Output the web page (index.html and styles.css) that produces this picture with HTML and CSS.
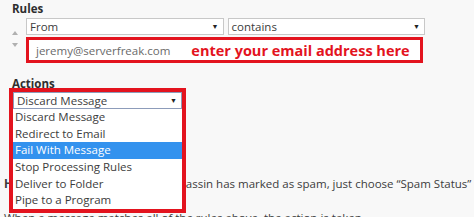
FILE: index.html
```html
<!DOCTYPE html>
<html lang="en">
  <head>
    <meta charset="UTF-8" />
    <title>Email Filter Rules</title>
    <link rel="stylesheet" href="styles.css">
  </head>
  <body>
    <div class="page">
      <h3 class="section-title">Rules</h3>

      <div class="rule-row">
        <div class="order">
          <span class="arrow-up"></span>
          <span class="arrow-down"></span>
        </div>
        <div class="fields">
          <div class="field-line">
            <div class="select">From<span class="caret">&#9660;</span></div>
            <div class="select">contains<span class="caret">&#9660;</span></div>
          </div>
          <div class="email-box">
            <span class="email-value">jeremy@serverfreak.com</span>
            <span class="email-note">enter your email address here</span>
          </div>
        </div>
      </div>

      <h3 class="section-title actions-title">Actions</h3>

      <div class="picker">
        <div class="select select-focus">Discard Message<span class="caret">&#9660;</span></div>
        <ul class="menu">
          <li>Discard Message</li>
          <li>Redirect to Email</li>
          <li class="active">Fail With Message</li>
          <li>Stop Processing Rules</li>
          <li>Deliver to Folder</li>
          <li>Pipe to a Program</li>
        </ul>
      </div>

      <p class="hint"><b>Hint:</b> If you wish to filter SpamAssassin has marked as spam, just choose &ldquo;Spam Status&rdquo; and set it to match.</p>
      <p class="hint">When a message matches all of the rules above, the action is taken.</p>
    </div>
  </body>
</html>
```

FILE: styles.css
```css
body {
  margin: 0;
  background-color: #f8f8f8;
  font-family: "Open Sans", "Liberation Sans", sans-serif;
  font-size: 11.5px;
  color: #3c3c3c;
  overflow: hidden;
}
.page {
  padding: 0 4px;
}
.section-title {
  margin: 0;
  padding-left: 8px;
  font-size: 11.5px;
  line-height: 17px;
  color: #2e2e2e;
}
.actions-title {
  margin-top: 12px;
}
.rule-row {
  display: flex;
  margin-top: 1px;
}
.order {
  width: 22px;
  display: flex;
  flex-direction: column;
  align-items: center;
  padding-top: 13px;
  gap: 8px;
}
.arrow-up,
.arrow-down {
  width: 0;
  height: 0;
  border-left: 3px solid transparent;
  border-right: 3px solid transparent;
}
.arrow-up {
  border-bottom: 4px solid #b0b0b0;
}
.arrow-down {
  border-top: 4px solid #b0b0b0;
}
.fields {
  width: 399px;
}
.field-line {
  display: flex;
  gap: 4px;
}
.select {
  flex: 1;
  height: 17px;
  box-sizing: border-box;
  display: flex;
  align-items: center;
  justify-content: space-between;
  padding: 0 4px 0 3px;
  background-color: white;
  border: 1px solid #c8c8c8;
  color: #3c3c3c;
  line-height: 15px;
}
.caret {
  font-size: 7px;
  color: #222;
}
.email-box {
  width: 397px;
  height: 26px;
  margin-top: 2px;
  box-sizing: border-box;
  display: flex;
  align-items: center;
  padding-left: 7px;
  background-color: white;
  border: 3px solid #e3131e;
}
.email-value {
  color: #6a6a6a;
}
.email-note {
  margin-left: 21px;
  color: #e3131e;
  font-weight: bold;
  font-size: 14.5px;
}
.picker {
  position: relative;
  width: 169px;
  margin-left: 9px;
}
.picker::after {
  content: "";
  position: absolute;
  top: -4px;
  left: -4px;
  right: -4px;
  height: 125px;
  box-sizing: border-box;
  border: 4px solid #e3131e;
  z-index: 2;
}
.select-focus {
  border-color: #8d9cba;
}
.menu {
  position: absolute;
  top: 100%;
  left: 0;
  right: 0;
  margin: 0;
  padding: 0;
  list-style: none;
  background-color: white;
  z-index: 1;
}
.menu li {
  height: 16.7px;
  line-height: 16.7px;
  padding-left: 2px;
  color: #3c3c3c;
}
.menu li.active {
  background-color: #3392ee;
  color: white;
}
.hint {
  margin: 0;
  line-height: 17px;
  white-space: nowrap;
}
.hint:first-of-type {
  margin-top: 66px;
}
.hint + .hint {
  margin-top: 17px;
}
```
